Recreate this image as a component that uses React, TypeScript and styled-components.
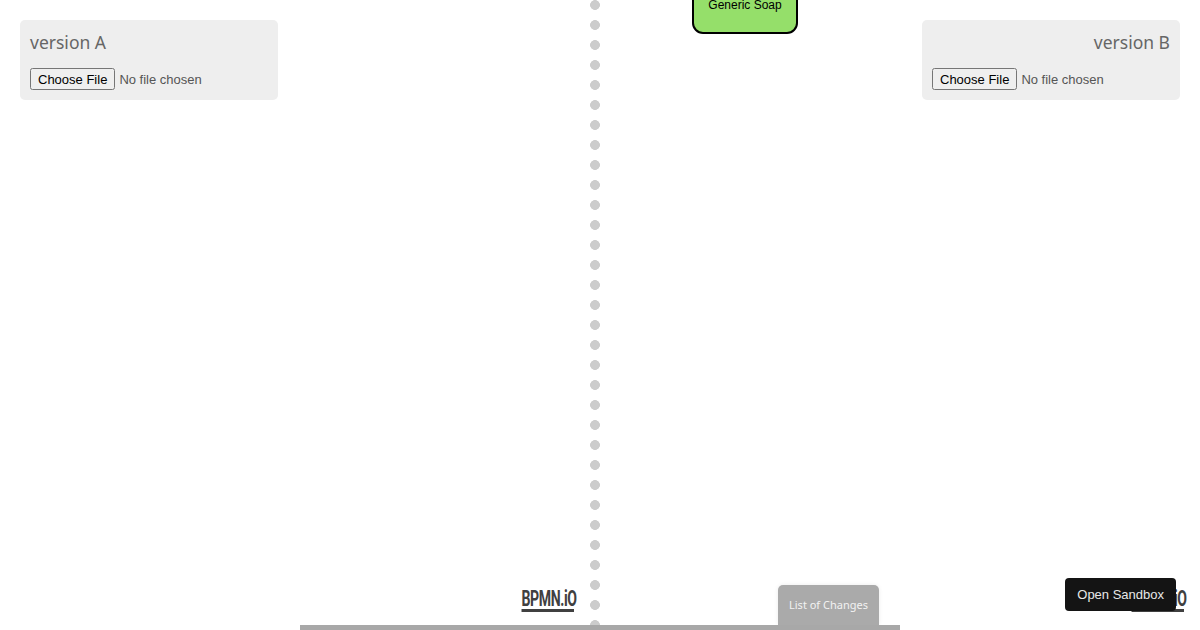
import React from "react";
import styled, { createGlobalStyle } from "styled-components";

const GlobalStyle = createGlobalStyle`
  html, body, #root {
    margin: 0;
    height: 100%;
    overflow: hidden;
  }
  body {
    background: #fff;
    font-family: "Noto Sans", "Liberation Sans", sans-serif;
  }
`;

const Page = styled.div`
  position: relative;
  display: flex;
  width: 100%;
  height: 100%;
`;

const Canvas = styled.div<{ $fixed?: number }>`
  position: relative;
  flex: ${(p) => (p.$fixed ? `0 0 ${p.$fixed}px` : "1 1 auto")};
  height: 100%;
`;

const Divider = styled.div`
  flex: 0 0 10px;
  height: 100%;
  background-image: radial-gradient(circle, #cccccc 4.6px, transparent 5.2px);
  background-size: 10px 20px;
  background-position: 0 -5px;
`;

const FilePanel = styled.div<{ $side: "left" | "right" }>`
  position: absolute;
  top: 20px;
  ${(p) => (p.$side === "left" ? "left: 20px;" : "right: 20px;")}
  width: 258px;
  height: 80px;
  box-sizing: border-box;
  padding: 9px 10px;
  background: #eeeeee;
  border-radius: 5px;
  display: flex;
  flex-direction: column;
  gap: 13px;
  text-align: ${(p) => p.$side};
`;

const PanelTitle = styled.div`
  font-size: 17.5px;
  line-height: 26px;
  color: #666666;
`;

const FileRow = styled.div`
  text-align: left;
  line-height: 0;
`;

const FileInput = styled.input`
  font-family: "Liberation Sans", Arial, sans-serif;
  font-size: 13px;
  color: #555555;
  margin: 0;
  &::file-selector-button {
    height: 22px;
    padding: 1px 6px;
    font-family: "Liberation Sans", Arial, sans-serif;
    font-size: 13px;
  }
`;

const Logo = styled.a`
  position: absolute;
  right: 16px;
  bottom: 18px;
  display: inline-block;
  text-decoration: none;
  color: #404040;
`;

const LogoText = styled.span`
  display: block;
  font-family: "Roboto", "Liberation Sans", sans-serif;
  font-weight: 700;
  font-size: 22px;
  line-height: 18px;
  letter-spacing: -0.6px;
  transform: scaleX(0.64);
  transform-origin: right center;
  width: 82px;
  margin-left: -28px;
  text-align: right;
  border-bottom: 3px solid #404040;
  padding-bottom: 1px;
`;

const NodeSvg = styled.svg`
  position: absolute;
  left: 91px;
  top: 0;
`;

const Drawer = styled.div`
  position: absolute;
  left: 300px;
  bottom: 0;
  width: 600px;
  display: flex;
  flex-direction: column;
  align-items: flex-end;
`;

const DrawerTab = styled.div`
  margin-right: 21px;
  width: 101px;
  height: 40px;
  background: #aaaaaa;
  border-radius: 5px 5px 0 0;
  box-shadow: 0 0 4px rgba(0, 0, 0, 0.08);
  color: #f2f2f2;
  font-family: "Noto Sans", "Liberation Sans", sans-serif;
  font-size: 11px;
  display: flex;
  align-items: center;
  justify-content: center;
  padding-bottom: 1px;
  box-sizing: border-box;
`;

const DrawerBody = styled.div`
  width: 100%;
  height: 5px;
  background: #a8a8a8;
`;

const SandboxButton = styled.button`
  position: absolute;
  right: 24px;
  bottom: 19px;
  height: 33px;
  padding: 0 12px;
  border: none;
  border-radius: 4px;
  background: #141414;
  color: #e8e8e8;
  font-family: "Liberation Sans", Arial, sans-serif;
  font-size: 13px;
`;

export default function App() {
  return (
    <>
      <GlobalStyle />
      <Page>
        <Canvas $fixed={590}>
          <FilePanel $side="left">
            <PanelTitle>version A</PanelTitle>
            <FileRow>
              <FileInput type="file" />
            </FileRow>
          </FilePanel>
          <Logo>
            <LogoText>BPMN.iO</LogoText>
          </Logo>
        </Canvas>
        <Divider />
        <Canvas>
          <NodeSvg width="110" height="36" viewBox="0 0 110 36">
            <rect
              x="2"
              y="-40"
              width="104"
              height="73"
              rx="10"
              fill="#95df6a"
              stroke="#000"
              strokeWidth="2"
            />
            <text
              x="54"
              y="9"
              textAnchor="middle"
              fontFamily="Liberation Sans, Arial, sans-serif"
              fontSize="12"
              fill="#000"
            >
              Generic Soap
            </text>
          </NodeSvg>
          <FilePanel $side="right">
            <PanelTitle>version B</PanelTitle>
            <FileRow>
              <FileInput type="file" />
            </FileRow>
          </FilePanel>
          <Logo>
            <LogoText>BPMN.iO</LogoText>
          </Logo>
        </Canvas>
        <Drawer>
          <DrawerTab>List of Changes</DrawerTab>
          <DrawerBody />
        </Drawer>
        <SandboxButton>Open Sandbox</SandboxButton>
      </Page>
    </>
  );
}
